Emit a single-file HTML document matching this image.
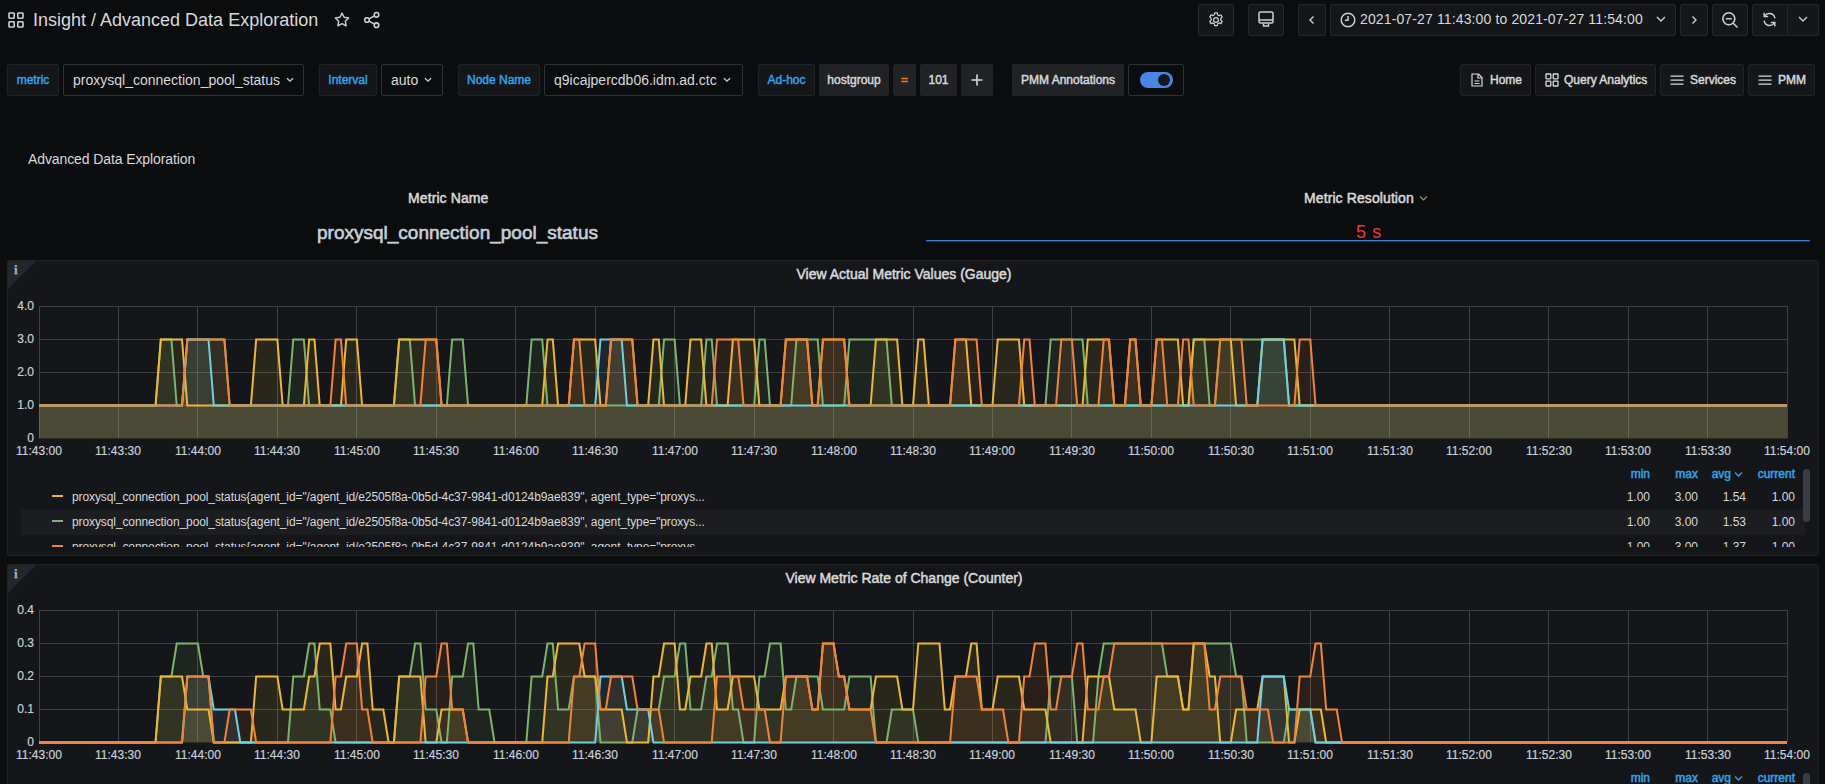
<!DOCTYPE html>
<html><head><meta charset="utf-8"><style>
*{box-sizing:border-box;margin:0;padding:0}
html,body{width:1825px;height:784px;overflow:hidden;background:#0b0c0e;font-family:"Liberation Sans",sans-serif;color:#d8d9da}
.a{position:absolute}
.btn{position:absolute;background:#141619;border:1px solid #24272b;border-radius:2px}
.lbl{position:absolute;background:#141619;border:1px solid #202226;border-radius:2px;color:#33a2e5;font-size:12px;-webkit-text-stroke:0.45px #33a2e5;display:flex;align-items:center;justify-content:center}
.inp{position:absolute;background:#0b0c0e;border:1px solid #2c3235;border-radius:2px;color:#d8d9da;font-size:14px;display:flex;align-items:center;padding-left:9px}
.tag{position:absolute;background:#202226;border-radius:2px;font-size:12px;-webkit-text-stroke:0.45px currentColor;color:#d8d9da;display:flex;align-items:center;justify-content:center}
.lnk{white-space:nowrap;position:absolute;background:#141619;border:1px solid #202226;border-radius:2px;font-size:12px;-webkit-text-stroke:0.45px currentColor;color:#d8d9da;display:flex;align-items:center}
.panel{position:absolute;background:#141619;border:1px solid #202226;border-radius:3px;overflow:hidden}
.t{position:absolute;white-space:nowrap}
.ax{font-size:12px;line-height:14px;color:#c7d0d9;-webkit-text-stroke:0.2px #c7d0d9}
.lh{font-size:12px;line-height:14px;color:#33a2e5;-webkit-text-stroke:0.5px #33a2e5}
.lg{font-size:12px;line-height:14px;color:#d8d9da}
.lgl{letter-spacing:-0.1px}
.ttl{font-size:14px;line-height:16px;-webkit-text-stroke:0.5px currentColor;color:#d8d9da}

</style></head><body>

<!-- header -->
<svg class="a" style="left:8px;top:12px" width="16" height="16" viewBox="0 0 16 16"><g fill="none" stroke="#c7d0d9" stroke-width="1.6"><rect x="1" y="1" width="5.2" height="5.2" rx="0.6"/><rect x="9.8" y="1" width="5.2" height="5.2" rx="0.6"/><rect x="1" y="9.8" width="5.2" height="5.2" rx="0.6"/><rect x="9.8" y="9.8" width="5.2" height="5.2" rx="0.6"/></g></svg>
<div class="t" style="left:33px;top:9px;font-size:18px;color:#d8d9da;line-height:22px">Insight / Advanced Data Exploration</div>
<svg class="a" style="left:333px;top:11px" width="18" height="18" viewBox="0 0 24 24"><path d="M12 2.8l2.75 5.6 6.15.9-4.45 4.35 1.05 6.1L12 16.9l-5.5 2.85 1.05-6.1L3.1 9.3l6.15-.9z" fill="none" stroke="#c7d0d9" stroke-width="1.9" stroke-linejoin="round"/></svg>
<svg class="a" style="left:363px;top:11px" width="18" height="18" viewBox="0 0 18 18"><g fill="none" stroke="#c7d0d9" stroke-width="1.6"><circle cx="13.5" cy="3.8" r="2.3"/><circle cx="4" cy="9" r="2.3"/><circle cx="13.5" cy="14.2" r="2.3"/><path d="M6 7.9l5.5-3M6 10.1l5.5 3"/></g></svg>

<div class="btn" style="left:1198px;top:4px;width:36px;height:32px"></div>
<svg class="a" style="left:1207px;top:11px" width="18" height="18" viewBox="0 0 24 24"><g fill="none" stroke="#c7d0d9" stroke-width="1.6"><circle cx="12" cy="12" r="3.2"/><path d="M10.3 2.5h3.4l.5 2.6 1.9 1.1 2.5-.9 1.7 2.9-2 1.8v2.1l2 1.8-1.7 2.9-2.5-.9-1.9 1.1-.5 2.6h-3.4l-.5-2.6-1.9-1.1-2.5.9-1.7-2.9 2-1.8V9.9l-2-1.8 1.7-2.9 2.5.9 1.9-1.1z" stroke-linejoin="round"/></g></svg>
<div class="btn" style="left:1248px;top:4px;width:36px;height:32px"></div>
<svg class="a" style="left:1258px;top:11px" width="16" height="17" viewBox="0 0 16 17"><g fill="none" stroke="#c7d0d9" stroke-width="1.5"><rect x="1" y="1" width="14" height="11" rx="1.5"/><path d="M1 9h14M5.5 12.5v2.5h5v-2.5"/></g></svg>
<div class="btn" style="left:1298px;top:4px;width:28px;height:32px"></div>
<svg class="a" style="left:1307px;top:15px" width="10" height="10" viewBox="0 0 10 10"><path d="M6.5 1.5L3 5l3.5 3.5" fill="none" stroke="#c7d0d9" stroke-width="1.4"/></svg>
<div class="btn" style="left:1330px;top:4px;width:346px;height:32px"></div>
<svg class="a" style="left:1340px;top:12px" width="16" height="16" viewBox="0 0 16 16"><g fill="none" stroke="#c7d0d9" stroke-width="1.5"><circle cx="8" cy="8" r="6.8"/><path d="M8 4v4.3h-3"/></g></svg>
<div class="t" style="left:1360px;top:11px;font-size:14px;color:#d8d9da;line-height:17px;letter-spacing:0.13px">2021-07-27 11:43:00 to 2021-07-27 11:54:00</div>
<svg class="a" style="left:1655px;top:14px" width="12" height="10" viewBox="0 0 12 10"><path d="M2 3l4 4 4-4" fill="none" stroke="#c7d0d9" stroke-width="1.4"/></svg>
<div class="btn" style="left:1680px;top:4px;width:28px;height:32px"></div>
<svg class="a" style="left:1689px;top:15px" width="10" height="10" viewBox="0 0 10 10"><path d="M3.5 1.5L7 5 3.5 8.5" fill="none" stroke="#c7d0d9" stroke-width="1.4"/></svg>
<div class="btn" style="left:1712px;top:4px;width:36px;height:32px"></div>
<svg class="a" style="left:1721px;top:11px" width="18" height="18" viewBox="0 0 18 18"><g fill="none" stroke="#c7d0d9" stroke-width="1.6"><circle cx="7.8" cy="7.8" r="6"/><path d="M4.8 7.8h6M12.2 12.2l4.3 4.3"/></g></svg>
<div class="btn" style="left:1752px;top:4px;width:36px;height:32px;border-radius:2px 0 0 2px"></div>
<div class="btn" style="left:1787px;top:4px;width:32px;height:32px;border-radius:0 2px 2px 0"></div>
<svg class="a" style="left:1761px;top:11px" width="17" height="17" viewBox="0 0 24 24"><g fill="none" stroke="#c7d0d9" stroke-width="2" stroke-linecap="round"><path d="M19.5 9.5A8 8 0 0 0 5 7.2"/><path d="M4.5 14.5A8 8 0 0 0 19 16.8"/><path d="M4.5 3v4.8h4.8M19.5 21v-4.8h-4.8"/></g></svg>
<svg class="a" style="left:1797px;top:14px" width="12" height="10" viewBox="0 0 12 10"><path d="M2 3l4 4 4-4" fill="none" stroke="#c7d0d9" stroke-width="1.4"/></svg>

<!-- variables row -->
<div class="lbl" style="left:7px;top:64px;width:52px;height:32px">metric</div>
<div class="inp" style="left:63px;top:64px;width:241px;height:32px">proxysql_connection_pool_status<svg style="position:static;margin-left:6px" width="8" height="6" viewBox="0 0 8 6"><path d="M1 1.2l3 3 3-3" fill="none" stroke="#c7d0d9" stroke-width="1.3"/></svg></div>
<div class="lbl" style="left:319px;top:64px;width:58px;height:32px">Interval</div>
<div class="inp" style="left:381px;top:64px;width:62px;height:32px">auto<svg style="position:static;margin-left:6px" width="8" height="6" viewBox="0 0 8 6"><path d="M1 1.2l3 3 3-3" fill="none" stroke="#c7d0d9" stroke-width="1.3"/></svg></div>
<div class="lbl" style="left:458px;top:64px;width:82px;height:32px">Node Name</div>
<div class="inp" style="left:544px;top:64px;width:199px;height:32px">q9icajpercdb06.idm.ad.ctc<svg style="position:static;margin-left:6px" width="8" height="6" viewBox="0 0 8 6"><path d="M1 1.2l3 3 3-3" fill="none" stroke="#c7d0d9" stroke-width="1.3"/></svg></div>
<div class="lbl" style="left:758px;top:64px;width:57px;height:32px">Ad-hoc</div>
<div class="tag" style="left:819px;top:64px;width:70px;height:32px">hostgroup</div>
<div class="tag" style="left:893px;top:64px;width:23px;height:32px;color:#eb7b18">=</div>
<div class="tag" style="left:920px;top:64px;width:37px;height:32px">101</div>
<div class="tag" style="left:961px;top:64px;width:32px;height:32px"><svg width="14" height="14" viewBox="0 0 14 14"><path d="M7 1.5v11M1.5 7h11" stroke="#d8d9da" stroke-width="1.6"/></svg></div>
<div class="tag" style="left:1012px;top:64px;width:112px;height:32px">PMM Annotations</div>
<div class="inp" style="left:1128px;top:64px;width:56px;height:32px;background:#0b0c0e"></div>
<div class="a" style="left:1140px;top:72px;width:33px;height:16px;border-radius:8px;background:#4a85e6"></div>
<div class="a" style="left:1158px;top:74px;width:12px;height:12px;border-radius:6px;background:#161719"></div>

<div class="lnk" style="left:1460px;top:64px;width:71px;height:32px;padding-left:10px"><svg width="12" height="14" viewBox="0 0 12 14" style="margin-right:7px"><g fill="none" stroke="#d8d9da" stroke-width="1.2"><path d="M1 1h6.5L11 4.5V13H1z"/><path d="M7 1v4h4M3.5 8h5M3.5 10.5h5"/></g></svg>Home</div>
<div class="lnk" style="left:1535px;top:64px;width:121px;height:32px;padding-left:9px"><svg width="14" height="14" viewBox="0 0 14 14" style="margin-right:5px"><g fill="none" stroke="#d8d9da" stroke-width="1.3"><rect x="1" y="1" width="4.8" height="4.8" rx="0.5"/><rect x="8.2" y="1" width="4.8" height="4.8" rx="0.5"/><rect x="1" y="8.2" width="4.8" height="4.8" rx="0.5"/><rect x="8.2" y="8.2" width="4.8" height="4.8" rx="0.5"/></g></svg>Query Analytics</div>
<div class="lnk" style="left:1660px;top:64px;width:84px;height:32px;padding-left:9px"><svg width="14" height="12" viewBox="0 0 14 12" style="margin-right:6px"><path d="M0.5 2h13M0.5 6h13M0.5 10h13" stroke="#d8d9da" stroke-width="1.25"/></svg>Services</div>
<div class="lnk" style="left:1748px;top:64px;width:67px;height:32px;padding-left:9px"><svg width="14" height="12" viewBox="0 0 14 12" style="margin-right:6px"><path d="M0.5 2h13M0.5 6h13M0.5 10h13" stroke="#d8d9da" stroke-width="1.25"/></svg>PMM</div>

<!-- metric name row -->
<div class="t" style="left:28px;top:151px;font-size:14px;line-height:16px;color:#d8d9da;letter-spacing:-0.1px">Advanced Data Exploration</div>
<div class="t" style="left:408px;top:190px;font-size:14px;line-height:16px;-webkit-text-stroke:0.5px currentColor;color:#d8d9da;letter-spacing:0.1px">Metric Name</div>
<div class="t" style="left:317px;top:222px;font-size:19px;line-height:22px;-webkit-text-stroke:0.6px currentColor;color:#c7d0d9;letter-spacing:0px">proxysql_connection_pool_status</div>
<div class="t" style="left:1304px;top:190px;font-size:14px;line-height:16px;-webkit-text-stroke:0.5px currentColor;color:#d8d9da;letter-spacing:0.1px">Metric Resolution</div>
<svg class="a" style="left:1419px;top:195px" width="9" height="7" viewBox="0 0 9 7"><path d="M1 1.5l3.5 3.5 3.5-3.5" fill="none" stroke="#8e8e8e" stroke-width="1.2"/></svg>
<div class="a" style="left:926px;top:240px;width:884px;height:1px;background:#3a7fd5"></div><div class="a" style="left:926px;top:241px;width:884px;height:1px;background:#16304f"></div>
<div class="t" style="left:1356px;top:222px;font-size:18px;line-height:20px;color:#ea3a3f;letter-spacing:0.6px">5 s</div>

<div class="panel" style="left:7px;top:260px;width:1812px;height:296px"></div>
<div class="a" style="left:8px;top:261px;width:0;height:0;border-top:28px solid #23262b;border-right:28px solid transparent"></div>
<div class="t" style="left:14px;top:263px;font-size:13px;line-height:13px;font-family:'Liberation Serif',serif;font-weight:bold;color:#a8b0bb;-webkit-text-stroke:0.3px #a8b0bb">i</div>
<div class="t ttl" style="left:604px;top:266px;width:600px;text-align:center">View Actual Metric Values (Gauge)</div>
<svg class="a" style="left:0;top:296px" width="1825" height="172" viewBox="0 296 1825 172">
<path d="M39.5 306 V438 M118.5 306 V438 M197.5 306 V438 M277.5 306 V438 M356.5 306 V438 M436.5 306 V438 M515.5 306 V438 M595.5 306 V438 M674.5 306 V438 M754.5 306 V438 M833.5 306 V438 M913.5 306 V438 M992.5 306 V438 M1071.5 306 V438 M1151.5 306 V438 M1230.5 306 V438 M1310.5 306 V438 M1389.5 306 V438 M1469.5 306 V438 M1548.5 306 V438 M1628.5 306 V438 M1707.5 306 V438 M1787.5 306 V438 M39 306.5 H1788 M39 339.5 H1788 M39 372.5 H1788 M39 405.5 H1788" stroke="#414244" stroke-width="1" fill="none" shape-rendering="crispEdges"/>
<path d="M39.00 405.50 L155.53 405.50 L160.83 339.50 L171.42 339.50 L176.72 405.50 L182.02 405.50 L187.32 339.50 L224.39 339.50 L229.69 405.50 L287.96 405.50 L293.25 339.50 L303.85 339.50 L309.15 405.50 L393.90 405.50 L399.19 339.50 L409.79 339.50 L415.08 405.50 L446.87 405.50 L452.16 339.50 L462.76 339.50 L468.05 405.50 L526.32 405.50 L531.62 339.50 L542.21 339.50 L547.51 405.50 L658.75 405.50 L664.04 339.50 L674.64 339.50 L679.93 405.50 L701.12 405.50 L706.42 339.50 L711.72 339.50 L717.01 405.50 L754.09 405.50 L759.39 339.50 L764.68 339.50 L769.98 405.50 L791.17 405.50 L796.47 339.50 L817.65 339.50 L822.95 405.50 L844.14 405.50 L849.44 339.50 L886.52 339.50 L891.81 405.50 L1045.42 405.50 L1050.72 339.50 L1082.50 339.50 L1087.80 405.50 L1188.44 405.50 L1193.74 339.50 L1204.33 339.50 L1209.63 405.50 L1214.93 405.50 L1220.22 339.50 L1283.79 339.50 L1289.08 405.50 L1787.00 405.50 L1787.00 438.50 L39.00 438.50 Z" fill="#7EB26D" fill-opacity="0.1" stroke="none"/>
<path d="M39.00 405.50 L155.53 405.50 L160.83 339.50 L182.02 339.50 L187.32 405.50 L250.88 405.50 L256.18 339.50 L277.36 339.50 L282.66 405.50 L303.85 405.50 L309.15 339.50 L314.44 339.50 L319.74 405.50 L340.93 405.50 L346.22 339.50 L356.82 339.50 L362.12 405.50 L393.90 405.50 L399.19 339.50 L436.27 339.50 L441.57 405.50 L542.21 405.50 L547.51 339.50 L552.81 339.50 L558.10 405.50 L568.70 405.50 L573.99 339.50 L595.18 339.50 L600.48 405.50 L605.78 405.50 L611.07 339.50 L632.26 339.50 L637.56 405.50 L648.15 405.50 L653.45 339.50 L658.75 339.50 L664.04 405.50 L685.23 405.50 L690.53 339.50 L701.12 339.50 L706.42 405.50 L727.61 405.50 L732.90 339.50 L754.09 339.50 L759.39 405.50 L780.58 405.50 L785.87 339.50 L807.06 339.50 L812.36 405.50 L817.65 405.50 L822.95 339.50 L844.14 339.50 L849.44 405.50 L870.62 405.50 L875.92 339.50 L897.11 339.50 L902.41 405.50 L913.00 405.50 L918.30 339.50 L923.59 339.50 L928.89 405.50 L950.08 405.50 L955.38 339.50 L965.97 339.50 L971.27 405.50 L992.45 405.50 L997.75 339.50 L1018.94 339.50 L1024.24 405.50 L1082.50 405.50 L1087.80 339.50 L1108.99 339.50 L1114.28 405.50 L1124.88 405.50 L1130.18 339.50 L1135.47 339.50 L1140.77 405.50 L1151.36 405.50 L1156.66 339.50 L1177.85 339.50 L1183.15 405.50 L1188.44 405.50 L1193.74 339.50 L1230.82 339.50 L1236.12 405.50 L1257.30 405.50 L1262.60 339.50 L1294.38 339.50 L1299.68 405.50 L1787.00 405.50 L1787.00 438.50 L39.00 438.50 Z" fill="#EAB839" fill-opacity="0.1" stroke="none"/>
<path d="M39.00 405.50 L182.02 405.50 L187.32 339.50 L208.50 339.50 L213.80 405.50 L595.18 405.50 L600.48 339.50 L621.67 339.50 L626.96 405.50 L1257.30 405.50 L1262.60 339.50 L1283.79 339.50 L1289.08 405.50 L1787.00 405.50 L1787.00 438.50 L39.00 438.50 Z" fill="#6ED0E0" fill-opacity="0.1" stroke="none"/>
<path d="M39.00 405.50 L182.02 405.50 L187.32 339.50 L224.39 339.50 L229.69 405.50 L330.33 405.50 L335.63 339.50 L340.93 339.50 L346.22 405.50 L420.38 405.50 L425.68 339.50 L436.27 339.50 L441.57 405.50 L568.70 405.50 L573.99 339.50 L579.29 339.50 L584.59 405.50 L605.78 405.50 L611.07 339.50 L632.26 339.50 L637.56 405.50 L711.72 405.50 L717.01 339.50 L738.20 339.50 L743.50 405.50 L780.58 405.50 L785.87 339.50 L807.06 339.50 L812.36 405.50 L817.65 405.50 L822.95 339.50 L844.14 339.50 L849.44 405.50 L950.08 405.50 L955.38 339.50 L976.56 339.50 L981.86 405.50 L1018.94 405.50 L1024.24 339.50 L1029.53 339.50 L1034.83 405.50 L1056.02 405.50 L1061.32 339.50 L1071.91 339.50 L1077.21 405.50 L1098.39 405.50 L1103.69 339.50 L1108.99 339.50 L1114.28 405.50 L1124.88 405.50 L1130.18 339.50 L1135.47 339.50 L1140.77 405.50 L1151.36 405.50 L1156.66 339.50 L1161.96 339.50 L1167.25 405.50 L1177.85 405.50 L1183.15 339.50 L1188.44 339.50 L1193.74 405.50 L1214.93 405.50 L1220.22 339.50 L1241.41 339.50 L1246.71 405.50 L1294.38 405.50 L1299.68 339.50 L1310.27 339.50 L1315.57 405.50 L1787.00 405.50 L1787.00 438.50 L39.00 438.50 Z" fill="#EF843C" fill-opacity="0.1" stroke="none"/>
<path d="M39.00 405.50 L155.53 405.50 L160.83 339.50 L171.42 339.50 L176.72 405.50 L182.02 405.50 L187.32 339.50 L224.39 339.50 L229.69 405.50 L287.96 405.50 L293.25 339.50 L303.85 339.50 L309.15 405.50 L393.90 405.50 L399.19 339.50 L409.79 339.50 L415.08 405.50 L446.87 405.50 L452.16 339.50 L462.76 339.50 L468.05 405.50 L526.32 405.50 L531.62 339.50 L542.21 339.50 L547.51 405.50 L658.75 405.50 L664.04 339.50 L674.64 339.50 L679.93 405.50 L701.12 405.50 L706.42 339.50 L711.72 339.50 L717.01 405.50 L754.09 405.50 L759.39 339.50 L764.68 339.50 L769.98 405.50 L791.17 405.50 L796.47 339.50 L817.65 339.50 L822.95 405.50 L844.14 405.50 L849.44 339.50 L886.52 339.50 L891.81 405.50 L1045.42 405.50 L1050.72 339.50 L1082.50 339.50 L1087.80 405.50 L1188.44 405.50 L1193.74 339.50 L1204.33 339.50 L1209.63 405.50 L1214.93 405.50 L1220.22 339.50 L1283.79 339.50 L1289.08 405.50 L1787.00 405.50" fill="none" stroke="#7EB26D" stroke-width="2" stroke-linejoin="miter" stroke-miterlimit="10"/>
<path d="M39.00 405.50 L155.53 405.50 L160.83 339.50 L182.02 339.50 L187.32 405.50 L250.88 405.50 L256.18 339.50 L277.36 339.50 L282.66 405.50 L303.85 405.50 L309.15 339.50 L314.44 339.50 L319.74 405.50 L340.93 405.50 L346.22 339.50 L356.82 339.50 L362.12 405.50 L393.90 405.50 L399.19 339.50 L436.27 339.50 L441.57 405.50 L542.21 405.50 L547.51 339.50 L552.81 339.50 L558.10 405.50 L568.70 405.50 L573.99 339.50 L595.18 339.50 L600.48 405.50 L605.78 405.50 L611.07 339.50 L632.26 339.50 L637.56 405.50 L648.15 405.50 L653.45 339.50 L658.75 339.50 L664.04 405.50 L685.23 405.50 L690.53 339.50 L701.12 339.50 L706.42 405.50 L727.61 405.50 L732.90 339.50 L754.09 339.50 L759.39 405.50 L780.58 405.50 L785.87 339.50 L807.06 339.50 L812.36 405.50 L817.65 405.50 L822.95 339.50 L844.14 339.50 L849.44 405.50 L870.62 405.50 L875.92 339.50 L897.11 339.50 L902.41 405.50 L913.00 405.50 L918.30 339.50 L923.59 339.50 L928.89 405.50 L950.08 405.50 L955.38 339.50 L965.97 339.50 L971.27 405.50 L992.45 405.50 L997.75 339.50 L1018.94 339.50 L1024.24 405.50 L1082.50 405.50 L1087.80 339.50 L1108.99 339.50 L1114.28 405.50 L1124.88 405.50 L1130.18 339.50 L1135.47 339.50 L1140.77 405.50 L1151.36 405.50 L1156.66 339.50 L1177.85 339.50 L1183.15 405.50 L1188.44 405.50 L1193.74 339.50 L1230.82 339.50 L1236.12 405.50 L1257.30 405.50 L1262.60 339.50 L1294.38 339.50 L1299.68 405.50 L1787.00 405.50" fill="none" stroke="#EAB839" stroke-width="2" stroke-linejoin="miter" stroke-miterlimit="10"/>
<path d="M39.00 405.50 L182.02 405.50 L187.32 339.50 L208.50 339.50 L213.80 405.50 L595.18 405.50 L600.48 339.50 L621.67 339.50 L626.96 405.50 L1257.30 405.50 L1262.60 339.50 L1283.79 339.50 L1289.08 405.50 L1787.00 405.50" fill="none" stroke="#6ED0E0" stroke-width="2" stroke-linejoin="miter" stroke-miterlimit="10"/>
<path d="M39.00 405.50 L182.02 405.50 L187.32 339.50 L224.39 339.50 L229.69 405.50 L330.33 405.50 L335.63 339.50 L340.93 339.50 L346.22 405.50 L420.38 405.50 L425.68 339.50 L436.27 339.50 L441.57 405.50 L568.70 405.50 L573.99 339.50 L579.29 339.50 L584.59 405.50 L605.78 405.50 L611.07 339.50 L632.26 339.50 L637.56 405.50 L711.72 405.50 L717.01 339.50 L738.20 339.50 L743.50 405.50 L780.58 405.50 L785.87 339.50 L807.06 339.50 L812.36 405.50 L817.65 405.50 L822.95 339.50 L844.14 339.50 L849.44 405.50 L950.08 405.50 L955.38 339.50 L976.56 339.50 L981.86 405.50 L1018.94 405.50 L1024.24 339.50 L1029.53 339.50 L1034.83 405.50 L1056.02 405.50 L1061.32 339.50 L1071.91 339.50 L1077.21 405.50 L1098.39 405.50 L1103.69 339.50 L1108.99 339.50 L1114.28 405.50 L1124.88 405.50 L1130.18 339.50 L1135.47 339.50 L1140.77 405.50 L1151.36 405.50 L1156.66 339.50 L1161.96 339.50 L1167.25 405.50 L1177.85 405.50 L1183.15 339.50 L1188.44 339.50 L1193.74 405.50 L1214.93 405.50 L1220.22 339.50 L1241.41 339.50 L1246.71 405.50 L1294.38 405.50 L1299.68 339.50 L1310.27 339.50 L1315.57 405.50 L1787.00 405.50" fill="none" stroke="#EF843C" stroke-width="2" stroke-linejoin="miter" stroke-miterlimit="10"/>
</svg>
<div class="t ax" style="right:1791px;top:299px">4.0</div>
<div class="t ax" style="right:1791px;top:332px">3.0</div>
<div class="t ax" style="right:1791px;top:365px">2.0</div>
<div class="t ax" style="right:1791px;top:398px">1.0</div>
<div class="t ax" style="right:1791px;top:431px">0</div>
<div class="t ax" style="left:-1px;top:444px;width:80px;text-align:center">11:43:00</div>
<div class="t ax" style="left:78px;top:444px;width:80px;text-align:center">11:43:30</div>
<div class="t ax" style="left:158px;top:444px;width:80px;text-align:center">11:44:00</div>
<div class="t ax" style="left:237px;top:444px;width:80px;text-align:center">11:44:30</div>
<div class="t ax" style="left:317px;top:444px;width:80px;text-align:center">11:45:00</div>
<div class="t ax" style="left:396px;top:444px;width:80px;text-align:center">11:45:30</div>
<div class="t ax" style="left:476px;top:444px;width:80px;text-align:center">11:46:00</div>
<div class="t ax" style="left:555px;top:444px;width:80px;text-align:center">11:46:30</div>
<div class="t ax" style="left:635px;top:444px;width:80px;text-align:center">11:47:00</div>
<div class="t ax" style="left:714px;top:444px;width:80px;text-align:center">11:47:30</div>
<div class="t ax" style="left:794px;top:444px;width:80px;text-align:center">11:48:00</div>
<div class="t ax" style="left:873px;top:444px;width:80px;text-align:center">11:48:30</div>
<div class="t ax" style="left:952px;top:444px;width:80px;text-align:center">11:49:00</div>
<div class="t ax" style="left:1032px;top:444px;width:80px;text-align:center">11:49:30</div>
<div class="t ax" style="left:1111px;top:444px;width:80px;text-align:center">11:50:00</div>
<div class="t ax" style="left:1191px;top:444px;width:80px;text-align:center">11:50:30</div>
<div class="t ax" style="left:1270px;top:444px;width:80px;text-align:center">11:51:00</div>
<div class="t ax" style="left:1350px;top:444px;width:80px;text-align:center">11:51:30</div>
<div class="t ax" style="left:1429px;top:444px;width:80px;text-align:center">11:52:00</div>
<div class="t ax" style="left:1509px;top:444px;width:80px;text-align:center">11:52:30</div>
<div class="t ax" style="left:1588px;top:444px;width:80px;text-align:center">11:53:00</div>
<div class="t ax" style="left:1668px;top:444px;width:80px;text-align:center">11:53:30</div>
<div class="t ax" style="left:1747px;top:444px;width:80px;text-align:center">11:54:00</div>
<div class="t lh" style="right:175px;top:467px">min</div>
<div class="t lh" style="right:127px;top:467px">max</div>
<div class="t lh" style="right:94px;top:467px">avg</div>
<svg class="a" style="left:1734px;top:471px" width="9" height="7" viewBox="0 0 9 7"><path d="M1 1.5l3.5 3.5 3.5-3.5" fill="none" stroke="#33a2e5" stroke-width="1.3"/></svg>
<div class="t lh" style="right:30px;top:467px">current</div>
<div class="a" style="left:21px;top:510px;width:1784px;height:25px;background:#1b1d21"></div>
<div class="a" style="left:20px;top:485px;width:1790px;height:62px;overflow:hidden">
<div class="a" style="left:-20px;top:-485px;width:1825px;height:784px"><div class="a" style="left:52px;top:495px;width:11px;height:2px;background:#EAB839"></div>
<div class="t lg lgl" style="left:72px;top:490px">proxysql_connection_pool_status{agent_id=&quot;/agent_id/e2505f8a-0b5d-4c37-9841-d0124b9ae839&quot;, agent_type=&quot;proxys...</div>
<div class="t lg" style="right:175px;top:490px">1.00</div>
<div class="t lg" style="right:127px;top:490px">3.00</div>
<div class="t lg" style="right:79px;top:490px">1.54</div>
<div class="t lg" style="right:30px;top:490px">1.00</div>
<div class="a" style="left:52px;top:520px;width:11px;height:2px;background:#7EB26D"></div>
<div class="t lg lgl" style="left:72px;top:515px">proxysql_connection_pool_status{agent_id=&quot;/agent_id/e2505f8a-0b5d-4c37-9841-d0124b9ae839&quot;, agent_type=&quot;proxys...</div>
<div class="t lg" style="right:175px;top:515px">1.00</div>
<div class="t lg" style="right:127px;top:515px">3.00</div>
<div class="t lg" style="right:79px;top:515px">1.53</div>
<div class="t lg" style="right:30px;top:515px">1.00</div>
<div class="a" style="left:52px;top:545px;width:11px;height:2px;background:#EF843C"></div>
<div class="t lg lgl" style="left:72px;top:540px">proxysql_connection_pool_status{agent_id=&quot;/agent_id/e2505f8a-0b5d-4c37-9841-d0124b9ae839&quot;, agent_type=&quot;proxys...</div>
<div class="t lg" style="right:175px;top:540px">1.00</div>
<div class="t lg" style="right:127px;top:540px">3.00</div>
<div class="t lg" style="right:79px;top:540px">1.37</div>
<div class="t lg" style="right:30px;top:540px">1.00</div></div></div>
<div class="a" style="left:1803px;top:469px;width:7px;height:53px;border-radius:4px;background:#3a3d44"></div>
<div class="panel" style="left:7px;top:564px;width:1812px;height:260px"></div>
<div class="a" style="left:8px;top:565px;width:0;height:0;border-top:28px solid #23262b;border-right:28px solid transparent"></div>
<div class="t" style="left:14px;top:567px;font-size:13px;line-height:13px;font-family:'Liberation Serif',serif;font-weight:bold;color:#a8b0bb;-webkit-text-stroke:0.3px #a8b0bb">i</div>
<div class="t ttl" style="left:604px;top:570px;width:600px;text-align:center">View Metric Rate of Change (Counter)</div>
<svg class="a" style="left:0;top:600px" width="1825" height="172" viewBox="0 600 1825 172">
<path d="M39.5 610 V742 M118.5 610 V742 M197.5 610 V742 M277.5 610 V742 M356.5 610 V742 M436.5 610 V742 M515.5 610 V742 M595.5 610 V742 M674.5 610 V742 M754.5 610 V742 M833.5 610 V742 M913.5 610 V742 M992.5 610 V742 M1071.5 610 V742 M1151.5 610 V742 M1230.5 610 V742 M1310.5 610 V742 M1389.5 610 V742 M1469.5 610 V742 M1548.5 610 V742 M1628.5 610 V742 M1707.5 610 V742 M1787.5 610 V742 M39 610.5 H1788 M39 643.5 H1788 M39 676.5 H1788 M39 709.5 H1788" stroke="#414244" stroke-width="1" fill="none" shape-rendering="crispEdges"/>
<path d="M39.00 742.50 L155.53 742.50 L160.83 676.50 L171.42 676.50 L176.72 643.50 L197.91 643.50 L203.21 676.50 L208.50 676.50 L213.80 742.50 L287.96 742.50 L293.25 676.50 L303.85 676.50 L309.15 643.50 L314.44 643.50 L319.74 709.50 L330.33 709.50 L335.63 742.50 L393.90 742.50 L399.19 676.50 L409.79 676.50 L415.08 643.50 L420.38 643.50 L425.68 709.50 L436.27 709.50 L441.57 742.50 L446.87 742.50 L452.16 676.50 L462.76 676.50 L468.05 643.50 L473.35 643.50 L478.65 709.50 L489.24 709.50 L494.54 742.50 L526.32 742.50 L531.62 676.50 L542.21 676.50 L547.51 643.50 L552.81 643.50 L558.10 709.50 L568.70 709.50 L573.99 676.50 L595.18 676.50 L600.48 742.50 L632.26 742.50 L637.56 709.50 L658.75 709.50 L664.04 676.50 L674.64 676.50 L679.93 643.50 L685.23 643.50 L690.53 709.50 L701.12 709.50 L706.42 676.50 L711.72 676.50 L717.01 643.50 L727.61 643.50 L732.90 709.50 L738.20 709.50 L743.50 742.50 L754.09 742.50 L759.39 676.50 L764.68 676.50 L769.98 643.50 L780.58 643.50 L785.87 709.50 L791.17 709.50 L796.47 676.50 L817.65 676.50 L822.95 709.50 L844.14 709.50 L849.44 676.50 L870.62 676.50 L875.92 742.50 L886.52 742.50 L891.81 709.50 L913.00 709.50 L918.30 742.50 L1045.42 742.50 L1050.72 676.50 L1071.91 676.50 L1077.21 742.50 L1093.10 742.50 L1098.39 676.50 L1103.69 643.50 L1161.96 643.50 L1167.25 676.50 L1177.85 676.50 L1183.15 709.50 L1188.44 709.50 L1193.74 643.50 L1230.82 643.50 L1236.12 676.50 L1241.41 676.50 L1246.71 742.50 L1283.79 742.50 L1289.08 709.50 L1310.27 709.50 L1315.57 742.50 L1787.00 742.50 L1787.00 742.50 L39.00 742.50 Z" fill="#7EB26D" fill-opacity="0.1" stroke="none"/>
<path d="M39.00 742.50 L155.53 742.50 L160.83 676.50 L182.02 676.50 L187.32 709.50 L208.50 709.50 L213.80 742.50 L250.88 742.50 L256.18 676.50 L277.36 676.50 L282.66 709.50 L303.85 709.50 L309.15 676.50 L314.44 676.50 L319.74 643.50 L330.33 643.50 L335.63 709.50 L340.93 709.50 L346.22 676.50 L356.82 676.50 L362.12 643.50 L367.41 643.50 L372.71 709.50 L383.30 709.50 L388.60 742.50 L393.90 742.50 L399.19 676.50 L420.38 676.50 L425.68 742.50 L436.27 742.50 L441.57 709.50 L462.76 709.50 L468.05 742.50 L542.21 742.50 L547.51 676.50 L552.81 676.50 L558.10 643.50 L579.29 643.50 L584.59 676.50 L595.18 676.50 L600.48 709.50 L621.67 709.50 L626.96 742.50 L648.15 742.50 L653.45 676.50 L658.75 676.50 L664.04 643.50 L674.64 643.50 L679.93 709.50 L685.23 709.50 L690.53 676.50 L701.12 676.50 L706.42 643.50 L711.72 643.50 L717.01 709.50 L727.61 709.50 L732.90 676.50 L754.09 676.50 L759.39 709.50 L780.58 709.50 L785.87 676.50 L807.06 676.50 L812.36 709.50 L817.65 709.50 L822.95 643.50 L833.55 643.50 L838.84 676.50 L844.14 676.50 L849.44 709.50 L870.62 709.50 L875.92 676.50 L897.11 676.50 L902.41 709.50 L913.00 709.50 L918.30 643.50 L939.48 643.50 L944.78 709.50 L950.08 709.50 L955.38 676.50 L965.97 676.50 L971.27 643.50 L976.56 643.50 L981.86 709.50 L992.45 709.50 L997.75 676.50 L1018.94 676.50 L1024.24 709.50 L1045.42 709.50 L1050.72 742.50 L1082.50 742.50 L1087.80 676.50 L1108.99 676.50 L1114.28 709.50 L1135.47 709.50 L1140.77 742.50 L1151.36 742.50 L1156.66 676.50 L1177.85 676.50 L1183.15 709.50 L1188.44 709.50 L1193.74 643.50 L1204.33 643.50 L1209.63 676.50 L1214.93 676.50 L1220.22 742.50 L1230.82 742.50 L1236.12 709.50 L1257.30 709.50 L1262.60 676.50 L1283.79 676.50 L1289.08 742.50 L1294.38 742.50 L1299.68 709.50 L1320.87 709.50 L1326.16 742.50 L1787.00 742.50 L1787.00 742.50 L39.00 742.50 Z" fill="#EAB839" fill-opacity="0.1" stroke="none"/>
<path d="M39.00 742.50 L182.02 742.50 L187.32 676.50 L208.50 676.50 L213.80 709.50 L234.99 709.50 L240.28 742.50 L595.18 742.50 L600.48 676.50 L621.67 676.50 L626.96 709.50 L648.15 709.50 L653.45 742.50 L1257.30 742.50 L1262.60 676.50 L1283.79 676.50 L1289.08 709.50 L1310.27 709.50 L1315.57 742.50 L1787.00 742.50 L1787.00 742.50 L39.00 742.50 Z" fill="#6ED0E0" fill-opacity="0.1" stroke="none"/>
<path d="M39.00 742.50 L182.02 742.50 L187.32 676.50 L208.50 676.50 L213.80 742.50 L224.39 742.50 L229.69 709.50 L250.88 709.50 L256.18 742.50 L330.33 742.50 L335.63 676.50 L340.93 676.50 L346.22 643.50 L356.82 643.50 L362.12 709.50 L367.41 709.50 L372.71 742.50 L420.38 742.50 L425.68 676.50 L436.27 676.50 L441.57 643.50 L446.87 643.50 L452.16 709.50 L462.76 709.50 L468.05 742.50 L568.70 742.50 L573.99 676.50 L579.29 676.50 L584.59 643.50 L595.18 643.50 L600.48 709.50 L605.78 709.50 L611.07 676.50 L632.26 676.50 L637.56 709.50 L658.75 709.50 L664.04 742.50 L711.72 742.50 L717.01 676.50 L738.20 676.50 L743.50 709.50 L764.68 709.50 L769.98 742.50 L780.58 742.50 L785.87 676.50 L807.06 676.50 L812.36 709.50 L817.65 709.50 L822.95 643.50 L833.55 643.50 L838.84 676.50 L844.14 676.50 L849.44 709.50 L870.62 709.50 L875.92 742.50 L950.08 742.50 L955.38 676.50 L976.56 676.50 L981.86 709.50 L1003.05 709.50 L1008.35 742.50 L1018.94 742.50 L1024.24 676.50 L1029.53 676.50 L1034.83 643.50 L1045.42 643.50 L1050.72 709.50 L1056.02 709.50 L1061.32 676.50 L1071.91 676.50 L1077.21 643.50 L1082.50 643.50 L1087.80 709.50 L1098.39 709.50 L1103.69 676.50 L1108.99 676.50 L1114.28 643.50 L1204.33 643.50 L1209.63 709.50 L1214.93 709.50 L1220.22 676.50 L1241.41 676.50 L1246.71 709.50 L1267.90 709.50 L1273.19 742.50 L1294.38 742.50 L1299.68 676.50 L1310.27 676.50 L1315.57 643.50 L1320.87 643.50 L1326.16 709.50 L1336.76 709.50 L1342.05 742.50 L1787.00 742.50 L1787.00 742.50 L39.00 742.50 Z" fill="#EF843C" fill-opacity="0.1" stroke="none"/>
<path d="M39.00 742.50 L155.53 742.50 L160.83 676.50 L171.42 676.50 L176.72 643.50 L197.91 643.50 L203.21 676.50 L208.50 676.50 L213.80 742.50 L287.96 742.50 L293.25 676.50 L303.85 676.50 L309.15 643.50 L314.44 643.50 L319.74 709.50 L330.33 709.50 L335.63 742.50 L393.90 742.50 L399.19 676.50 L409.79 676.50 L415.08 643.50 L420.38 643.50 L425.68 709.50 L436.27 709.50 L441.57 742.50 L446.87 742.50 L452.16 676.50 L462.76 676.50 L468.05 643.50 L473.35 643.50 L478.65 709.50 L489.24 709.50 L494.54 742.50 L526.32 742.50 L531.62 676.50 L542.21 676.50 L547.51 643.50 L552.81 643.50 L558.10 709.50 L568.70 709.50 L573.99 676.50 L595.18 676.50 L600.48 742.50 L632.26 742.50 L637.56 709.50 L658.75 709.50 L664.04 676.50 L674.64 676.50 L679.93 643.50 L685.23 643.50 L690.53 709.50 L701.12 709.50 L706.42 676.50 L711.72 676.50 L717.01 643.50 L727.61 643.50 L732.90 709.50 L738.20 709.50 L743.50 742.50 L754.09 742.50 L759.39 676.50 L764.68 676.50 L769.98 643.50 L780.58 643.50 L785.87 709.50 L791.17 709.50 L796.47 676.50 L817.65 676.50 L822.95 709.50 L844.14 709.50 L849.44 676.50 L870.62 676.50 L875.92 742.50 L886.52 742.50 L891.81 709.50 L913.00 709.50 L918.30 742.50 L1045.42 742.50 L1050.72 676.50 L1071.91 676.50 L1077.21 742.50 L1093.10 742.50 L1098.39 676.50 L1103.69 643.50 L1161.96 643.50 L1167.25 676.50 L1177.85 676.50 L1183.15 709.50 L1188.44 709.50 L1193.74 643.50 L1230.82 643.50 L1236.12 676.50 L1241.41 676.50 L1246.71 742.50 L1283.79 742.50 L1289.08 709.50 L1310.27 709.50 L1315.57 742.50 L1787.00 742.50" fill="none" stroke="#7EB26D" stroke-width="2" stroke-linejoin="miter" stroke-miterlimit="10"/>
<path d="M39.00 742.50 L155.53 742.50 L160.83 676.50 L182.02 676.50 L187.32 709.50 L208.50 709.50 L213.80 742.50 L250.88 742.50 L256.18 676.50 L277.36 676.50 L282.66 709.50 L303.85 709.50 L309.15 676.50 L314.44 676.50 L319.74 643.50 L330.33 643.50 L335.63 709.50 L340.93 709.50 L346.22 676.50 L356.82 676.50 L362.12 643.50 L367.41 643.50 L372.71 709.50 L383.30 709.50 L388.60 742.50 L393.90 742.50 L399.19 676.50 L420.38 676.50 L425.68 742.50 L436.27 742.50 L441.57 709.50 L462.76 709.50 L468.05 742.50 L542.21 742.50 L547.51 676.50 L552.81 676.50 L558.10 643.50 L579.29 643.50 L584.59 676.50 L595.18 676.50 L600.48 709.50 L621.67 709.50 L626.96 742.50 L648.15 742.50 L653.45 676.50 L658.75 676.50 L664.04 643.50 L674.64 643.50 L679.93 709.50 L685.23 709.50 L690.53 676.50 L701.12 676.50 L706.42 643.50 L711.72 643.50 L717.01 709.50 L727.61 709.50 L732.90 676.50 L754.09 676.50 L759.39 709.50 L780.58 709.50 L785.87 676.50 L807.06 676.50 L812.36 709.50 L817.65 709.50 L822.95 643.50 L833.55 643.50 L838.84 676.50 L844.14 676.50 L849.44 709.50 L870.62 709.50 L875.92 676.50 L897.11 676.50 L902.41 709.50 L913.00 709.50 L918.30 643.50 L939.48 643.50 L944.78 709.50 L950.08 709.50 L955.38 676.50 L965.97 676.50 L971.27 643.50 L976.56 643.50 L981.86 709.50 L992.45 709.50 L997.75 676.50 L1018.94 676.50 L1024.24 709.50 L1045.42 709.50 L1050.72 742.50 L1082.50 742.50 L1087.80 676.50 L1108.99 676.50 L1114.28 709.50 L1135.47 709.50 L1140.77 742.50 L1151.36 742.50 L1156.66 676.50 L1177.85 676.50 L1183.15 709.50 L1188.44 709.50 L1193.74 643.50 L1204.33 643.50 L1209.63 676.50 L1214.93 676.50 L1220.22 742.50 L1230.82 742.50 L1236.12 709.50 L1257.30 709.50 L1262.60 676.50 L1283.79 676.50 L1289.08 742.50 L1294.38 742.50 L1299.68 709.50 L1320.87 709.50 L1326.16 742.50 L1787.00 742.50" fill="none" stroke="#EAB839" stroke-width="2" stroke-linejoin="miter" stroke-miterlimit="10"/>
<path d="M39.00 742.50 L182.02 742.50 L187.32 676.50 L208.50 676.50 L213.80 709.50 L234.99 709.50 L240.28 742.50 L595.18 742.50 L600.48 676.50 L621.67 676.50 L626.96 709.50 L648.15 709.50 L653.45 742.50 L1257.30 742.50 L1262.60 676.50 L1283.79 676.50 L1289.08 709.50 L1310.27 709.50 L1315.57 742.50 L1787.00 742.50" fill="none" stroke="#6ED0E0" stroke-width="2" stroke-linejoin="miter" stroke-miterlimit="10"/>
<path d="M39.00 742.50 L182.02 742.50 L187.32 676.50 L208.50 676.50 L213.80 742.50 L224.39 742.50 L229.69 709.50 L250.88 709.50 L256.18 742.50 L330.33 742.50 L335.63 676.50 L340.93 676.50 L346.22 643.50 L356.82 643.50 L362.12 709.50 L367.41 709.50 L372.71 742.50 L420.38 742.50 L425.68 676.50 L436.27 676.50 L441.57 643.50 L446.87 643.50 L452.16 709.50 L462.76 709.50 L468.05 742.50 L568.70 742.50 L573.99 676.50 L579.29 676.50 L584.59 643.50 L595.18 643.50 L600.48 709.50 L605.78 709.50 L611.07 676.50 L632.26 676.50 L637.56 709.50 L658.75 709.50 L664.04 742.50 L711.72 742.50 L717.01 676.50 L738.20 676.50 L743.50 709.50 L764.68 709.50 L769.98 742.50 L780.58 742.50 L785.87 676.50 L807.06 676.50 L812.36 709.50 L817.65 709.50 L822.95 643.50 L833.55 643.50 L838.84 676.50 L844.14 676.50 L849.44 709.50 L870.62 709.50 L875.92 742.50 L950.08 742.50 L955.38 676.50 L976.56 676.50 L981.86 709.50 L1003.05 709.50 L1008.35 742.50 L1018.94 742.50 L1024.24 676.50 L1029.53 676.50 L1034.83 643.50 L1045.42 643.50 L1050.72 709.50 L1056.02 709.50 L1061.32 676.50 L1071.91 676.50 L1077.21 643.50 L1082.50 643.50 L1087.80 709.50 L1098.39 709.50 L1103.69 676.50 L1108.99 676.50 L1114.28 643.50 L1204.33 643.50 L1209.63 709.50 L1214.93 709.50 L1220.22 676.50 L1241.41 676.50 L1246.71 709.50 L1267.90 709.50 L1273.19 742.50 L1294.38 742.50 L1299.68 676.50 L1310.27 676.50 L1315.57 643.50 L1320.87 643.50 L1326.16 709.50 L1336.76 709.50 L1342.05 742.50 L1787.00 742.50" fill="none" stroke="#EF843C" stroke-width="2" stroke-linejoin="miter" stroke-miterlimit="10"/>
</svg>
<div class="t ax" style="right:1791px;top:603px">0.4</div>
<div class="t ax" style="right:1791px;top:636px">0.3</div>
<div class="t ax" style="right:1791px;top:669px">0.2</div>
<div class="t ax" style="right:1791px;top:702px">0.1</div>
<div class="t ax" style="right:1791px;top:735px">0</div>
<div class="t ax" style="left:-1px;top:748px;width:80px;text-align:center">11:43:00</div>
<div class="t ax" style="left:78px;top:748px;width:80px;text-align:center">11:43:30</div>
<div class="t ax" style="left:158px;top:748px;width:80px;text-align:center">11:44:00</div>
<div class="t ax" style="left:237px;top:748px;width:80px;text-align:center">11:44:30</div>
<div class="t ax" style="left:317px;top:748px;width:80px;text-align:center">11:45:00</div>
<div class="t ax" style="left:396px;top:748px;width:80px;text-align:center">11:45:30</div>
<div class="t ax" style="left:476px;top:748px;width:80px;text-align:center">11:46:00</div>
<div class="t ax" style="left:555px;top:748px;width:80px;text-align:center">11:46:30</div>
<div class="t ax" style="left:635px;top:748px;width:80px;text-align:center">11:47:00</div>
<div class="t ax" style="left:714px;top:748px;width:80px;text-align:center">11:47:30</div>
<div class="t ax" style="left:794px;top:748px;width:80px;text-align:center">11:48:00</div>
<div class="t ax" style="left:873px;top:748px;width:80px;text-align:center">11:48:30</div>
<div class="t ax" style="left:952px;top:748px;width:80px;text-align:center">11:49:00</div>
<div class="t ax" style="left:1032px;top:748px;width:80px;text-align:center">11:49:30</div>
<div class="t ax" style="left:1111px;top:748px;width:80px;text-align:center">11:50:00</div>
<div class="t ax" style="left:1191px;top:748px;width:80px;text-align:center">11:50:30</div>
<div class="t ax" style="left:1270px;top:748px;width:80px;text-align:center">11:51:00</div>
<div class="t ax" style="left:1350px;top:748px;width:80px;text-align:center">11:51:30</div>
<div class="t ax" style="left:1429px;top:748px;width:80px;text-align:center">11:52:00</div>
<div class="t ax" style="left:1509px;top:748px;width:80px;text-align:center">11:52:30</div>
<div class="t ax" style="left:1588px;top:748px;width:80px;text-align:center">11:53:00</div>
<div class="t ax" style="left:1668px;top:748px;width:80px;text-align:center">11:53:30</div>
<div class="t ax" style="left:1747px;top:748px;width:80px;text-align:center">11:54:00</div>
<div class="t lh" style="right:175px;top:771px">min</div>
<div class="t lh" style="right:127px;top:771px">max</div>
<div class="t lh" style="right:94px;top:771px">avg</div>
<svg class="a" style="left:1734px;top:775px" width="9" height="7" viewBox="0 0 9 7"><path d="M1 1.5l3.5 3.5 3.5-3.5" fill="none" stroke="#33a2e5" stroke-width="1.3"/></svg>
<div class="t lh" style="right:30px;top:771px">current</div>
<div class="a" style="left:1803px;top:773px;width:7px;height:53px;border-radius:4px;background:#3a3d44"></div>
</body></html>
